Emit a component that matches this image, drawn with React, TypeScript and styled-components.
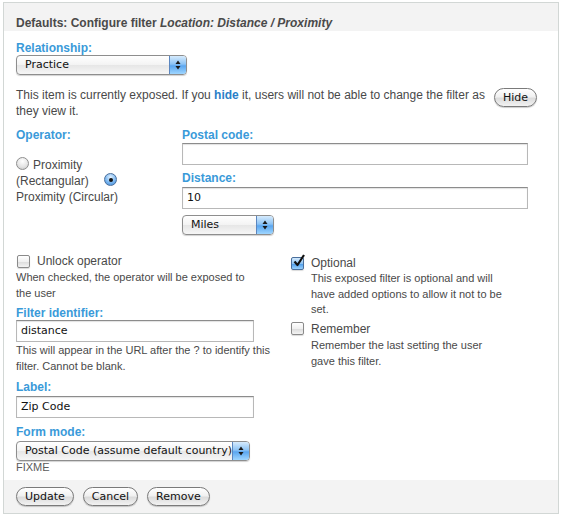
import styled, { createGlobalStyle } from 'styled-components'

const GlobalStyle = createGlobalStyle`
  body {
    margin: 0;
    background: #fff;
    font-family: "Liberation Sans", Arial, sans-serif;
    color: #494949;
  }
`

const Page = styled.div`
  padding: 2px 4px 3px 3px;
`

const Panel = styled.div`
  border: 1px solid #d2d7d5;
`

const Header = styled.div`
  background: #f3f3f3;
  padding: 13px 12px 1px;
  font-size: 12px;
  line-height: 14px;
  font-weight: bold;
  color: #4a4a4a;
`

const Body = styled.div`
  padding: 10px 12px 6px;
`

const Label = styled.div<{ $mt?: number }>`
  margin-top: ${p => p.$mt ?? 0}px;
  font-size: 12px;
  line-height: 14px;
  font-weight: bold;
  color: #3a9ad9;
`

const SelectBox = styled.div<{ $w: number; $mt?: number }>`
  width: ${p => p.$w}px;
  height: 20px;
  margin-top: ${p => p.$mt ?? 0}px;
  box-sizing: border-box;
  display: flex;
  align-items: stretch;
  border: 1px solid #8e8e8e;
  border-radius: 4px;
  background: linear-gradient(#ffffff, #f3f3f3 50%, #e6e6e6 51%, #f6f6f6);
  box-shadow: 0 1px 1px rgba(0, 0, 0, 0.18);
  font-family: "DejaVu Sans", Verdana, sans-serif;
  font-size: 11px;
  color: #111;
`

const SelectText = styled.span`
  flex: 1;
  padding-left: 8px;
  line-height: 18px;
  white-space: nowrap;
`

const SelectCap = styled.span`
  width: 16px;
  display: flex;
  align-items: center;
  justify-content: center;
  border-left: 1px solid #5b86bf;
  border-radius: 0 3px 3px 0;
  background: linear-gradient(#d6ebfd, #8cc3f5 45%, #5aa6f0 55%, #9fd6ff);
`

const Row = styled.div<{ $mt?: number }>`
  display: flex;
  align-items: flex-start;
  margin-top: ${p => p.$mt ?? 0}px;
`

const ExposedText = styled.p`
  width: 478px;
  margin: 0;
  font-size: 12px;
  line-height: 16px;
`

const Link = styled.a`
  color: #2a7fc8;
  font-weight: bold;
  text-decoration: none;
`

const PillButton = styled.button<{ $mt?: number }>`
  height: 19px;
  margin-top: ${p => p.$mt ?? 0}px;
  padding: 0 8px;
  border: 1px solid #7a7a7a;
  border-radius: 10px;
  background: linear-gradient(#ffffff, #f1f1f1 45%, #dcdcdc 55%, #f2f2f2);
  box-shadow: 0 1px 1px rgba(0, 0, 0, 0.2);
  font-family: "DejaVu Sans", Verdana, sans-serif;
  font-size: 11px;
  line-height: 17px;
  color: #111;
`

const Column = styled.div<{ $w?: number; $mt?: number }>`
  width: ${p => (p.$w ? `${p.$w}px` : 'auto')};
  flex: ${p => (p.$w ? 'none' : '1')};
  margin-top: ${p => p.$mt ?? 0}px;
`

const RadioGroup = styled.div`
  width: 130px;
  margin-top: 15px;
  font-size: 12px;
  line-height: 16px;
`

const Radio = styled.span<{ $checked?: boolean; $ml?: number }>`
  display: inline-block;
  position: relative;
  width: 13px;
  height: 13px;
  box-sizing: border-box;
  margin: 0 4px 0 ${p => p.$ml ?? 0}px;
  vertical-align: -1px;
  border-radius: 50%;
  border: 1px solid ${p => (p.$checked ? '#4a6f9c' : '#8e8e8e')};
  background: ${p =>
    p.$checked
      ? 'radial-gradient(circle at 50% 30%, #e4f2ff, #7db8f0 55%, #3c86d6)'
      : 'radial-gradient(circle at 50% 30%, #ffffff, #e6e6e6 55%, #c4c4c4)'};
  &::after {
    content: '';
    display: ${p => (p.$checked ? 'block' : 'none')};
    position: absolute;
    left: 3.5px;
    top: 3.5px;
    width: 4px;
    height: 4px;
    border-radius: 50%;
    background: #111;
  }
`

const TextInput = styled.div<{ $w: number; $mt?: number }>`
  width: ${p => p.$w}px;
  height: 22px;
  margin-top: ${p => p.$mt ?? 0}px;
  box-sizing: border-box;
  padding-left: 4px;
  border: 1px solid #b8b8b8;
  border-top-color: #8c8c8c;
  box-shadow: inset 0 1px 1px rgba(0, 0, 0, 0.12);
  background: #fff;
  font-family: "DejaVu Sans", Verdana, sans-serif;
  font-size: 11px;
  line-height: 20px;
  color: #111;
`

const CheckLine = styled.div<{ $mt?: number }>`
  display: flex;
  align-items: center;
  margin-top: ${p => p.$mt ?? 0}px;
  font-size: 12px;
  line-height: 16px;
  color: #494949;
`

const Checkbox = styled.span<{ $checked?: boolean }>`
  position: relative;
  width: 13px;
  height: 13px;
  box-sizing: border-box;
  margin: 0 7px 0 1px;
  border: 1px solid ${p => (p.$checked ? '#4a6f9c' : '#8a8a8a')};
  border-radius: 2px;
  background: ${p =>
    p.$checked
      ? 'linear-gradient(#d4eafd, #8ec4f4 50%, #4f9de9 55%, #9ad2ff)'
      : 'linear-gradient(#ffffff, #f0f0f0 50%, #dcdcdc 55%, #f3f3f3)'};
  box-shadow: 0 1px 1px rgba(0, 0, 0, 0.15);
  svg {
    position: absolute;
    left: 0px;
    top: -4px;
  }
`

const Description = styled.div<{ $indent?: number; $w?: number; $lh?: number }>`
  margin-left: ${p => p.$indent ?? 0}px;
  width: ${p => (p.$w ? `${p.$w}px` : 'auto')};
  font-size: 11px;
  line-height: ${p => p.$lh ?? 16}px;
  color: #494949;
`

const Note = styled.div`
  font-size: 11px;
  line-height: 13px;
  color: #5a5a5a;
`

const Footer = styled.div`
  display: flex;
  gap: 9px;
  padding: 7px 12px 7px;
  background: #f3f3f3;
`

function Arrows() {
  return (
    <svg width="6" height="10" viewBox="0 0 6 10">
      <path d="M3 0.5 L5.5 4 L0.5 4 Z" fill="#1a1a1a" />
      <path d="M3 9.5 L5.5 6 L0.5 6 Z" fill="#1a1a1a" />
    </svg>
  )
}

function Select({ value, width, mt }: { value: string; width: number; mt?: number }) {
  return (
    <SelectBox $w={width} $mt={mt}>
      <SelectText>{value}</SelectText>
      <SelectCap>
        <Arrows />
      </SelectCap>
    </SelectBox>
  )
}

function Check({ checked }: { checked?: boolean }) {
  return (
    <Checkbox $checked={checked}>
      {checked && (
        <svg width="14" height="14" viewBox="0 0 14 14">
          <path d="M2.5 7.5 L5.5 11 L12 1" fill="none" stroke="#111" strokeWidth="2.2" strokeLinejoin="round" />
        </svg>
      )}
    </Checkbox>
  )
}

function App() {
  return (
    <Page>
      <GlobalStyle />
      <Panel>
        <Header>
          Defaults: Configure filter <i>Location: Distance / Proximity</i>
        </Header>
        <Body>
          <Label>Relationship:</Label>
          <Select value="Practice" width={171} />

          <Row $mt={12}>
            <ExposedText>
              This item is currently exposed. If you <Link href="#">hide</Link> it, users will not be able to
              change the filter as they view it.
            </ExposedText>
            <PillButton $mt={1}>Hide</PillButton>
          </Row>

          <Row $mt={9}>
            <Column $w={166}>
              <Label>Operator:</Label>
              <RadioGroup>
                <Radio />Proximity (Rectangular) <Radio $checked $ml={12} /> Proximity (Circular)
              </RadioGroup>
            </Column>
            <Column>
              <Label>Postal code:</Label>
              <TextInput $w={346} $mt={1} />
              <Label $mt={6}>Distance:</Label>
              <TextInput $w={346} $mt={2}>10</TextInput>
              <Select value="Miles" width={92} mt={6} />
            </Column>
          </Row>

          <Row $mt={18}>
            <Column $w={274}>
              <CheckLine>
                <Check />
                Unlock operator
              </CheckLine>
              <Description $w={240}>When checked, the operator will be exposed to the user</Description>

              <Label $mt={5}>Filter identifier:</Label>
              <TextInput $w={238}>distance</TextInput>
              <Description $w={258}>This will appear in the URL after the ? to identify this filter. Cannot be blank.</Description>

              <Label $mt={6}>Label:</Label>
              <TextInput $w={238} $mt={2}>Zip Code</TextInput>

              <Label $mt={7}>Form mode:</Label>
              <Select value="Postal Code (assume default country)" width={234} mt={2} />
              <Note>FIXME</Note>
            </Column>
            <Column $mt={2}>
              <CheckLine>
                <Check checked />
                Optional
              </CheckLine>
              <Description $indent={21} $w={192} $lh={15.5}>
                This exposed filter is optional and will have added options to allow it not to be set.
              </Description>
              <CheckLine $mt={3}>
                <Check />
                Remember
              </CheckLine>
              <Description $indent={21} $w={185}>
                Remember the last setting the user gave this filter.
              </Description>
            </Column>
          </Row>
        </Body>
        <Footer>
          <PillButton>Update</PillButton>
          <PillButton>Cancel</PillButton>
          <PillButton>Remove</PillButton>
        </Footer>
      </Panel>
    </Page>
  )
}

export default App
